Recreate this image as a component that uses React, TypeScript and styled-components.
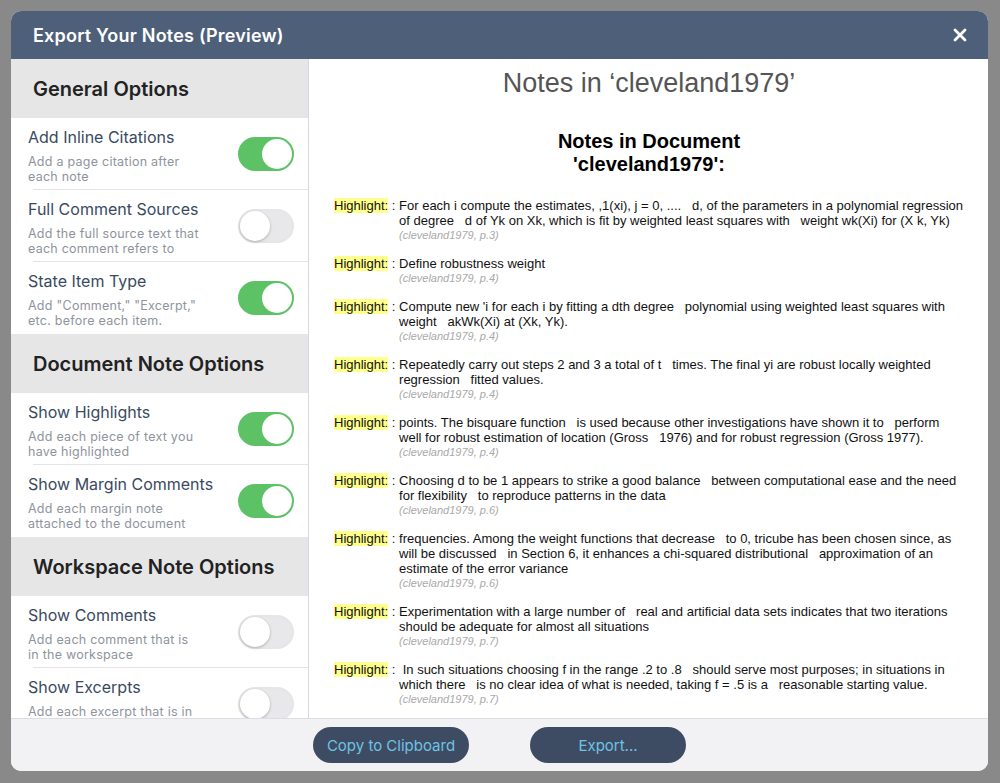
import React, { useState } from 'react';
import styled, { createGlobalStyle } from 'styled-components';

interface Option {
  title: string;
  hint: string[];
  on: boolean;
}

interface Section {
  name: string;
  options: Option[];
}

interface Note {
  text: string;
  page: string;
}

const sections: Section[] = [
  {
    name: 'General Options',
    options: [
      { title: 'Add Inline Citations', hint: ['Add a page citation after', 'each note'], on: true },
      { title: 'Full Comment Sources', hint: ['Add the full source text that', 'each comment refers to'], on: false },
      { title: 'State Item Type', hint: ['Add "Comment," "Excerpt,"', 'etc. before each item.'], on: true },
    ],
  },
  {
    name: 'Document Note Options',
    options: [
      { title: 'Show Highlights', hint: ['Add each piece of text you', 'have highlighted'], on: true },
      { title: 'Show Margin Comments', hint: ['Add each margin note', 'attached to the document'], on: true },
    ],
  },
  {
    name: 'Workspace Note Options',
    options: [
      { title: 'Show Comments', hint: ['Add each comment that is', 'in the workspace'], on: false },
      { title: 'Show Excerpts', hint: ['Add each excerpt that is in', 'the workspace'], on: false },
    ],
  },
];

const notes: Note[] = [
  {
    text: 'For each i compute the estimates, ,1(xi), j = 0, ....   d, of the parameters in a polynomial regression of degree   d of Yk on Xk, which is fit by weighted least squares with   weight wk(Xi) for (X k, Yk)',
    page: 'p.3',
  },
  { text: 'Define robustness weight', page: 'p.4' },
  {
    text: "Compute new 'i for each i by fitting a dth degree   polynomial using weighted least squares with weight   akWk(Xi) at (Xk, Yk).",
    page: 'p.4',
  },
  {
    text: 'Repeatedly carry out steps 2 and 3 a total of t   times. The final yi are robust locally weighted regression   fitted values.',
    page: 'p.4',
  },
  {
    text: 'points. The bisquare function   is used because other investigations have shown it to   perform well for robust estimation of location (Gross   1976) and for robust regression (Gross 1977).',
    page: 'p.4',
  },
  {
    text: 'Choosing d to be 1 appears to strike a good balance   between computational ease and the need for flexibility   to reproduce patterns in the data',
    page: 'p.6',
  },
  {
    text: 'frequencies. Among the weight functions that decrease   to 0, tricube has been chosen since, as will be discussed   in Section 6, it enhances a chi-squared distributional   approximation of an estimate of the error variance',
    page: 'p.6',
  },
  {
    text: 'Experimentation with a large number of   real and artificial data sets indicates that two iterations should be adequate for almost all situations',
    page: 'p.7',
  },
  {
    text: ' In such situations choosing f in the range .2 to .8   should serve most purposes; in situations in which there   is no clear idea of what is needed, taking f = .5 is a   reasonable starting value.',
    page: 'p.7',
  },
];

const GlobalStyle = createGlobalStyle`
  html, body {
    margin: 0;
    padding: 0;
    background: #898989;
  }
  * {
    box-sizing: border-box;
  }
`;

const Page = styled.div`
  width: 1000px;
  height: 783px;
  padding: 11px 12px 12px 11px;
`;

const Modal = styled.div`
  width: 100%;
  height: 100%;
  border-radius: 10px;
  overflow: hidden;
  display: flex;
  flex-direction: column;
  background: #fff;
  font-family: Inter, 'Open Sans', sans-serif;
`;

const Header = styled.div`
  height: 48px;
  flex: none;
  background: #4e6079;
  display: flex;
  align-items: center;
  justify-content: space-between;
  padding: 0 19px 0 22px;
`;

const HeaderTitle = styled.h1`
  margin: 0;
  color: #fff;
  font-size: 18px;
  font-weight: 600;
  letter-spacing: 0.2px;
`;

const CloseButton = styled.button`
  border: none;
  background: none;
  padding: 0;
  width: 18px;
  height: 18px;
  cursor: pointer;
  display: flex;
  align-items: center;
  justify-content: center;
`;

const Body = styled.div`
  flex: 1;
  display: flex;
  min-height: 0;
`;

const Sidebar = styled.div`
  width: 298px;
  flex: none;
  border-right: 1px solid #d6d6e6;
  overflow: hidden;
  background: #fff;
`;

const SectionHead = styled.div`
  height: 59px;
  background: #e6e6e7;
  display: flex;
  align-items: center;
  padding-left: 22px;
  font-size: 20px;
  font-weight: 600;
  color: #222;
`;

const OptionRow = styled.div<{ $last: boolean }>`
  height: 72px;
  display: flex;
  align-items: center;
  justify-content: space-between;
  padding: 0 14px 0 17px;
  position: relative;

  &::after {
    content: '';
    display: ${(p) => (p.$last ? 'none' : 'block')};
    position: absolute;
    left: 22px;
    right: 0;
    bottom: 0;
    height: 1px;
    background: #e4e4e8;
  }
`;

const OptionText = styled.div`
  align-self: flex-start;
  padding-top: 8px;
`;

const OptionTitle = styled.div`
  font-size: 16px;
  line-height: 22px;
  color: #394a5f;
  white-space: nowrap;
`;

const HintBlock = styled.div`
  margin-top: 6px;
  font-size: 12.5px;
  line-height: 15px;
  color: #8e949d;
  letter-spacing: 0.25px;
`;

const HintLine = styled.div`
  white-space: nowrap;
`;

const Toggle = styled.button<{ $on: boolean }>`
  width: 56px;
  height: 34px;
  flex: none;
  border-radius: 17px;
  border: 2px solid ${(p) => (p.$on ? '#5cc265' : '#e6e6e8')};
  background: ${(p) => (p.$on ? '#5cc265' : '#e8e8ea')};
  padding: 0;
  position: relative;
  cursor: pointer;

  &::after {
    content: '';
    position: absolute;
    top: 0;
    left: ${(p) => (p.$on ? '22px' : '0')};
    width: 30px;
    height: 30px;
    border-radius: 50%;
    background: #fff;
    box-shadow: ${(p) => (p.$on ? 'none' : '0 1px 3px rgba(0,0,0,0.25)')};
  }
`;

const Preview = styled.div`
  flex: 1;
  overflow: hidden;
  padding: 8px 24px 0 25px;
  font-family: 'Liberation Sans', Arial, sans-serif;
`;

const PreviewTitle = styled.h2`
  margin: 0;
  text-align: center;
  font-size: 27px;
  line-height: 32px;
  font-weight: 400;
  color: #555;
`;

const DocHeading = styled.h3`
  margin: 31px auto 22px;
  width: 220px;
  text-align: center;
  font-size: 20px;
  line-height: 23px;
  font-weight: 700;
  color: #000;
`;

const NoteList = styled.div`
  display: flex;
  flex-direction: column;
  gap: 13px;
`;

const NoteItem = styled.div`
  display: flex;
  align-items: flex-start;
  font-size: 13px;
  line-height: 15px;
  color: #111;
`;

const NoteLabel = styled.span`
  flex: none;
  white-space: pre;
`;

const Mark = styled.span`
  background: #ffff8c;
`;

const NoteBody = styled.div`
  flex: 1;
`;

const NoteText = styled.div`
  white-space: pre-wrap;
`;

const Cite = styled.div`
  font-size: 11px;
  font-style: italic;
  line-height: 15px;
  color: #a9a9a9;
`;

const Footer = styled.div`
  height: 53px;
  flex: none;
  background: #f2f2f5;
  border-top: 1px solid #dcdce4;
  display: flex;
  align-items: center;
  justify-content: center;
  gap: 61px;
`;

const PillButton = styled.button`
  width: 156px;
  height: 36px;
  border-radius: 18px;
  border: none;
  background: #3e4c63;
  color: #6ec3e3;
  font-family: Inter, 'Open Sans', sans-serif;
  font-size: 15px;
  cursor: pointer;
`;

const App = () => {
  const [state, setState] = useState<boolean[][]>(sections.map((s) => s.options.map((o) => o.on)));

  const flip = (si: number, oi: number) => {
    setState((prev) => prev.map((row, i) => (i === si ? row.map((v, j) => (j === oi ? !v : v)) : row)));
  };

  return (
    <Page>
      <GlobalStyle />
      <Modal>
        <Header>
          <HeaderTitle>Export Your Notes (Preview)</HeaderTitle>
          <CloseButton aria-label="Close">
            <svg width="14" height="14" viewBox="0 0 14 14">
              <path d="M2 2 L12 12 M12 2 L2 12" stroke="#fff" strokeWidth="2.8" strokeLinecap="round" />
            </svg>
          </CloseButton>
        </Header>
        <Body>
          <Sidebar>
            {sections.map((section, si) => (
              <div key={section.name}>
                <SectionHead>{section.name}</SectionHead>
                {section.options.map((opt, oi) => (
                  <OptionRow key={opt.title} $last={oi === section.options.length - 1}>
                    <OptionText>
                      <OptionTitle>{opt.title}</OptionTitle>
                      <HintBlock>
                        {opt.hint.map((line) => (
                          <HintLine key={line}>{line}</HintLine>
                        ))}
                      </HintBlock>
                    </OptionText>
                    <Toggle $on={state[si][oi]} onClick={() => flip(si, oi)} />
                  </OptionRow>
                ))}
              </div>
            ))}
          </Sidebar>
          <Preview>
            <PreviewTitle>Notes in ‘cleveland1979’</PreviewTitle>
            <DocHeading>Notes in Document 'cleveland1979':</DocHeading>
            <NoteList>
              {notes.map((note, i) => (
                <NoteItem key={i}>
                  <NoteLabel>
                    <Mark>Highlight:</Mark>{' : '}
                  </NoteLabel>
                  <NoteBody>
                    <NoteText>{note.text}</NoteText>
                    <Cite>(cleveland1979, {note.page})</Cite>
                  </NoteBody>
                </NoteItem>
              ))}
            </NoteList>
          </Preview>
        </Body>
        <Footer>
          <PillButton>Copy to Clipboard</PillButton>
          <PillButton>Export...</PillButton>
        </Footer>
      </Modal>
    </Page>
  );
};

export default App;
